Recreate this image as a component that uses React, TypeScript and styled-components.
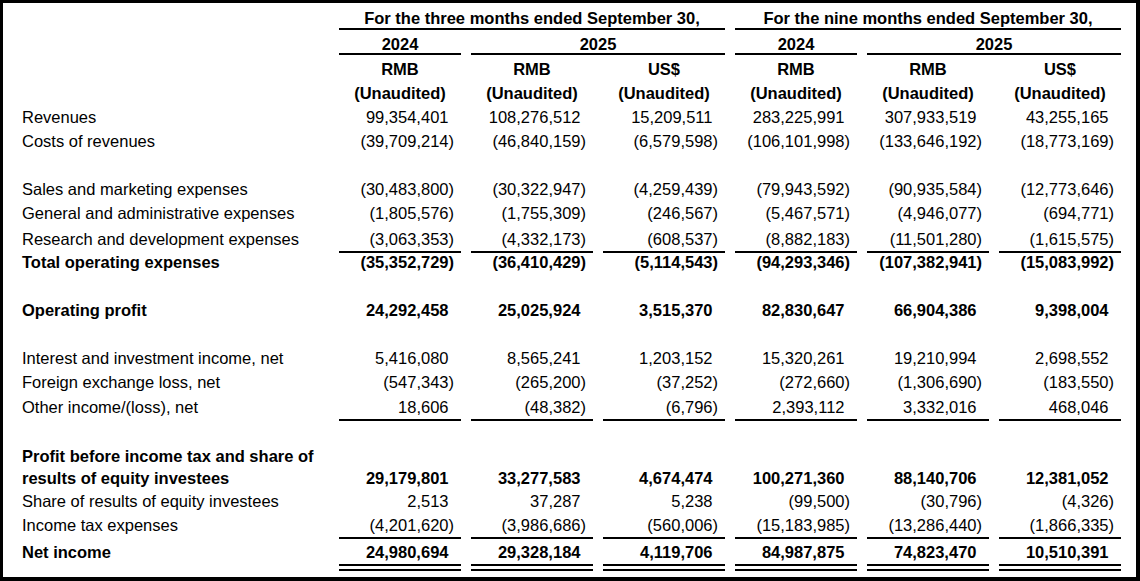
import styled, { createGlobalStyle } from 'styled-components';

type Rule = 'none' | 'single' | 'double';

interface Line {
  label?: string;
  values?: string[];
  bold?: boolean;
  rule?: Rule;
  h: number;
  wrap?: boolean;
}

const GlobalStyle = createGlobalStyle`
  html, body {
    margin: 0;
    padding: 0;
    background: #fff;
  }
  body {
    font-family: "Liberation Sans", Arial, sans-serif;
    color: #000;
  }
`;

const Frame = styled.div`
  box-sizing: border-box;
  width: 1140px;
  height: 581px;
  border: solid #000;
  border-width: 3px 4px 4px 3px;
  padding: 0 15px 0 19px;
  background: #fff;
  font-size: 16.5px;
`;

const Row = styled.div<{ $h: number }>`
  display: grid;
  grid-template-columns: 307px repeat(6, 122px);
  column-gap: 10px;
  height: ${(p) => p.$h}px;
`;

const ruleCss = (rule: Rule = 'none') =>
  rule === 'double'
    ? '7px double #000'
    : rule === 'single'
      ? '2px solid #000'
      : '2px solid transparent';

const HeadCell = styled.div<{ $span?: number; $line?: boolean; $pb?: number }>`
  grid-column: span ${(p) => p.$span ?? 1};
  align-self: end;
  text-align: center;
  font-weight: 700;
  line-height: 18px;
  white-space: nowrap;
  padding-bottom: ${(p) => p.$pb ?? 1}px;
  border-bottom: 2px solid ${(p) => (p.$line ? '#000' : 'transparent')};
`;

const Label = styled.div<{ $bold?: boolean; $wrap?: boolean; $bw: number }>`
  align-self: end;
  font-weight: ${(p) => (p.$bold ? 700 : 400)};
  line-height: ${(p) => (p.$wrap ? 22 : 18)}px;
  padding-bottom: ${(p) => (p.$wrap ? 1.5 : 3.5)}px;
  border-bottom: ${(p) => p.$bw}px solid transparent;
  white-space: ${(p) => (p.$wrap ? 'normal' : 'nowrap')};
  padding-right: ${(p) => (p.$wrap ? 14 : 0)}px;
`;

const Num = styled.div<{ $bold?: boolean; $rule?: Rule }>`
  align-self: end;
  text-align: right;
  font-weight: ${(p) => (p.$bold ? 700 : 400)};
  line-height: 18px;
  padding: 0 7px 3.5px 0;
  border-bottom: ${(p) => ruleCss(p.$rule)};
  white-space: nowrap;
`;

const Paren = styled.span`
  visibility: hidden;
`;

const lines: Line[] = [
  {
    label: 'Revenues',
    values: ['99,354,401', '108,276,512', '15,209,511', '283,225,991', '307,933,519', '43,255,165'],
    h: 24,
  },
  {
    label: 'Costs of revenues',
    values: ['(39,709,214)', '(46,840,159)', '(6,579,598)', '(106,101,998)', '(133,646,192)', '(18,773,169)'],
    h: 24,
  },
  { h: 24 },
  {
    label: 'Sales and marketing expenses',
    values: ['(30,483,800)', '(30,322,947)', '(4,259,439)', '(79,943,592)', '(90,935,584)', '(12,773,646)'],
    h: 24,
  },
  {
    label: 'General and administrative expenses',
    values: ['(1,805,576)', '(1,755,309)', '(246,567)', '(5,467,571)', '(4,946,077)', '(694,771)'],
    h: 24,
  },
  {
    label: 'Research and development expenses',
    values: ['(3,063,353)', '(4,332,173)', '(608,537)', '(8,882,183)', '(11,501,280)', '(1,615,575)'],
    rule: 'single',
    h: 26,
  },
  {
    label: 'Total operating expenses',
    values: ['(35,352,729)', '(36,410,429)', '(5,114,543)', '(94,293,346)', '(107,382,941)', '(15,083,992)'],
    bold: true,
    h: 23,
  },
  { h: 24 },
  {
    label: 'Operating profit',
    values: ['24,292,458', '25,025,924', '3,515,370', '82,830,647', '66,904,386', '9,398,004'],
    bold: true,
    h: 24,
  },
  { h: 24 },
  {
    label: 'Interest and investment income, net',
    values: ['5,416,080', '8,565,241', '1,203,152', '15,320,261', '19,210,994', '2,698,552'],
    h: 24,
  },
  {
    label: 'Foreign exchange loss, net',
    values: ['(547,343)', '(265,200)', '(37,252)', '(272,660)', '(1,306,690)', '(183,550)'],
    h: 24,
  },
  {
    label: 'Other income/(loss), net',
    values: ['18,606', '(48,382)', '(6,796)', '2,393,112', '3,332,016', '468,046'],
    rule: 'single',
    h: 25,
  },
  { h: 24 },
  {
    label: 'Profit before income tax and share of results of equity investees',
    values: ['29,179,801', '33,277,583', '4,674,474', '100,271,360', '88,140,706', '12,381,052'],
    bold: true,
    wrap: true,
    h: 46,
  },
  {
    label: 'Share of results of equity investees',
    values: ['2,513', '37,287', '5,238', '(99,500)', '(30,796)', '(4,326)'],
    h: 24,
  },
  {
    label: 'Income tax expenses',
    values: ['(4,201,620)', '(3,986,686)', '(560,006)', '(15,183,985)', '(13,286,440)', '(1,866,335)'],
    rule: 'single',
    h: 24,
  },
  {
    label: 'Net income',
    values: ['24,980,694', '29,328,184', '4,119,706', '84,987,875', '74,823,470', '10,510,391'],
    bold: true,
    rule: 'double',
    h: 32,
  },
];

const NumValue = ({ v }: { v: string }) =>
  v.startsWith('(') ? (
    <>{v}</>
  ) : (
    <>
      {v}
      <Paren>)</Paren>
    </>
  );

const App = () => {
  return (
    <>
      <GlobalStyle />
      <Frame>
        <Row $h={27}>
          <div />
          <HeadCell $span={3} $line>
            For the three months ended September 30,
          </HeadCell>
          <HeadCell $span={3} $line>
            For the nine months ended September 30,
          </HeadCell>
        </Row>
        <Row $h={25}>
          <div />
          <HeadCell $line $pb={0}>
            2024
          </HeadCell>
          <HeadCell $span={2} $line $pb={0}>
            2025
          </HeadCell>
          <HeadCell $line $pb={0}>
            2024
          </HeadCell>
          <HeadCell $span={2} $line $pb={0}>
            2025
          </HeadCell>
        </Row>
        <Row $h={28}>
          <div />
          {['RMB', 'RMB', 'US$', 'RMB', 'RMB', 'US$'].map((c, i) => (
            <HeadCell key={i} $pb={3.5}>
              {c}
            </HeadCell>
          ))}
        </Row>
        <Row $h={24}>
          <div />
          {Array.from({ length: 6 }).map((_, i) => (
            <HeadCell key={i} $pb={3.5}>
              (Unaudited)
            </HeadCell>
          ))}
        </Row>
        {lines.map((line, i) => (
          <Row key={i} $h={line.h}>
            {line.label && (
              <>
                <Label $bold={line.bold} $wrap={line.wrap} $bw={line.rule === 'double' ? 7 : 2}>
                  {line.label}
                </Label>
                {line.values?.map((v, j) => (
                  <Num key={j} $bold={line.bold} $rule={line.rule}>
                    <NumValue v={v} />
                  </Num>
                ))}
              </>
            )}
          </Row>
        ))}
      </Frame>
    </>
  );
};

export default App;
